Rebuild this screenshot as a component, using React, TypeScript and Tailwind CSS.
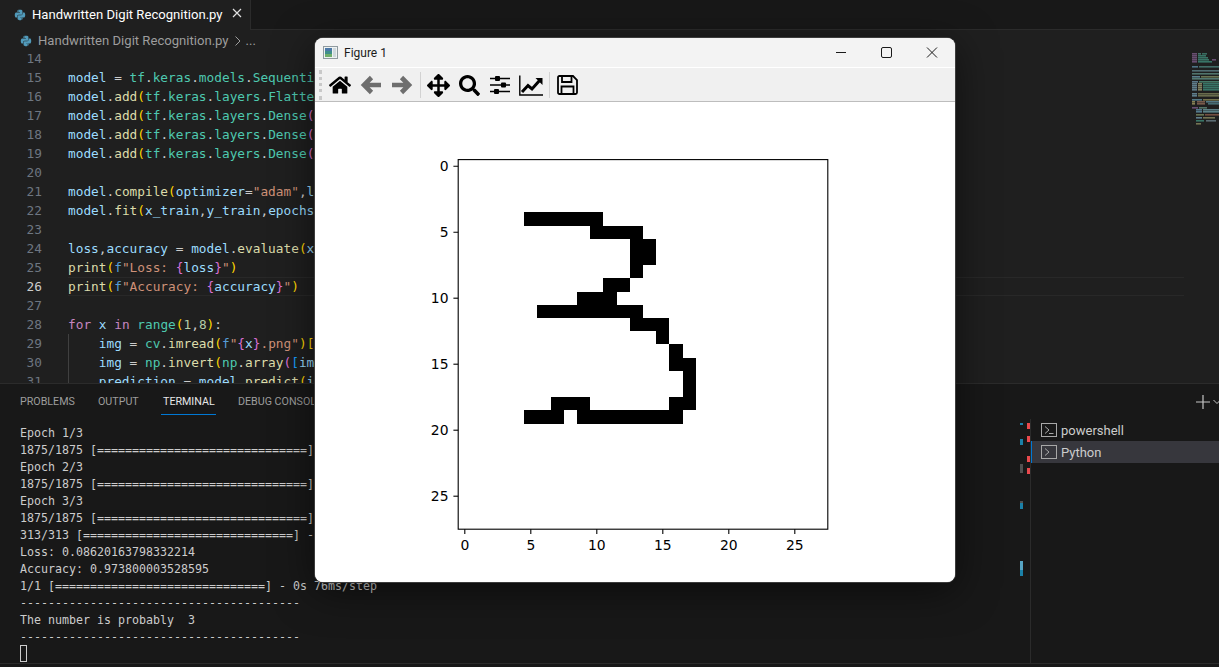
import { FaPython, FaHome, FaArrowsAlt, FaSearch } from 'react-icons/fa';

const ui = "font-['Roboto',sans-serif]";
const mono = "font-['DejaVu_Sans_Mono',monospace]";

const V = 'text-[#9cdcfe]';
const T = 'text-[#4ec9b0]';
const F = 'text-[#dcdcaa]';
const P = 'text-[#ffd700]';
const M = 'text-[#da70d6]';
const S = 'text-[#ce9178]';
const K = 'text-[#569cd6]';
const C = 'text-[#c586c0]';
const N = 'text-[#b5cea8]';
const W = 'text-[#cccccc]';
const L = 'text-[#179fff]';

type Tok = [string, string];

const addLine = (layer: string): Tok[] => [
  ['model', V], ['.', W], ['add', F], ['(', P], ['tf', T], ['.', W], ['keras', T], ['.', W], ['layers', T], ['.', W], [layer, T], ['(', M],
];

const code: Tok[][] = [
  [],
  [['model', V], [' = ', W], ['tf', T], ['.', W], ['keras', T], ['.', W], ['models', T], ['.', W], ['Sequential', T]],
  addLine('Flatten'),
  addLine('Dense'),
  addLine('Dense'),
  addLine('Dense'),
  [],
  [['model', V], ['.', W], ['compile', F], ['(', P], ['optimizer', V], ['=', W], ['"adam"', S], [',', W], ['loss', V]],
  [['model', V], ['.', W], ['fit', F], ['(', P], ['x_train', V], [',', W], ['y_train', V], [',', W], ['epochs', V]],
  [],
  [['loss', V], [',', W], ['accuracy', V], [' = ', W], ['model', V], ['.', W], ['evaluate', F], ['(', P], ['x_test', V]],
  [['print', F], ['(', P], ['f', K], ['"Loss: ', S], ['{', M], ['loss', V], ['}', M], ['"', S], [')', P]],
  [['print', F], ['(', P], ['f', K], ['"Accuracy: ', S], ['{', M], ['accuracy', V], ['}', M], ['"', S], [')', P]],
  [],
  [['for', C], [' ', W], ['x', V], [' ', W], ['in', C], [' ', W], ['range', T], ['(', P], ['1', N], [',', W], ['8', N], [')', P], [':', W]],
  [['    ', W], ['img', V], [' = ', W], ['cv', T], ['.', W], ['imread', F], ['(', P], ['f', K], ['"', S], ['{', M], ['x', V], ['}', M], ['.png"', S], [')', P], ['[', P]],
  [['    ', W], ['img', V], [' = ', W], ['np', T], ['.', W], ['invert', F], ['(', P], ['np', T], ['.', W], ['array', F], ['(', M], ['[', L], ['img', V]],
  [['    ', W], ['prediction', V], [' = ', W], ['model', V], ['.', W], ['predict', F], ['(', P], ['img', V]],
];

const bar = '='.repeat(30);
const dashes = '-'.repeat(40);
const terminal = [
  'Epoch 1/3',
  `1875/1875 [${bar}]`,
  'Epoch 2/3',
  `1875/1875 [${bar}]`,
  'Epoch 3/3',
  `1875/1875 [${bar}]`,
  `313/313 [${bar}] -`,
  'Loss: 0.08620163798332214',
  'Accuracy: 0.973800003528595',
  `1/1 [${bar}] - 0s 76ms/step`,
  dashes,
  'The number is probably  3',
  dashes,
];

// [row, first column, last column]
const digit = [
  [4, 5, 10], [5, 10, 13], [6, 13, 14], [7, 13, 14], [8, 13, 13], [9, 11, 12], [10, 9, 11],
  [11, 6, 13], [12, 13, 15], [13, 15, 15], [14, 16, 16], [15, 16, 17], [16, 17, 17], [17, 17, 17],
  [18, 7, 9], [18, 16, 17], [19, 5, 7], [19, 9, 16],
];

const ticks = [0, 5, 10, 15, 20, 25];
const cell = 13.2;
const axL = 143.2;
const axT = 57.6;

const Plot = () => (
  <svg width="640" height="480" viewBox="0 0 640 480" className="block">
    {digit.map(([r, a, b]) => (
      <rect key={`${r}-${a}`} x={axL + a * cell} y={axT + r * cell} width={(b - a + 1) * cell} height={cell} fill="#000" shapeRendering="crispEdges" />
    ))}
    <rect x={axL} y={axT} width="369.6" height="369.6" fill="none" stroke="#000" strokeWidth="1.1" />
    {ticks.map((t) => {
      const x = axL + (t + 0.5) * cell;
      const y = axT + (t + 0.5) * cell;
      return (
        <g key={t} fontFamily="DejaVu Sans, sans-serif" fontSize="13.9" fill="#000">
          <line x1={x} x2={x} y1="427.2" y2="432" stroke="#000" strokeWidth="1.1" />
          <text x={x} y="448" textAnchor="middle">{t}</text>
          <line x1="138.4" x2={axL} y1={y} y2={y} stroke="#000" strokeWidth="1.1" />
          <text x="133.5" y={y + 5} textAnchor="end">{t}</text>
        </g>
      );
    })}
  </svg>
);

const Arrow = ({ flip }: { flip?: boolean }) => (
  <svg width="22" height="20" viewBox="0 0 22 20" fill="none" stroke="#6e6e6e" strokeWidth="4.6" className={flip ? '-scale-x-100' : ''}>
    <path d="M11.5 2.5L4 10L11.5 17.5M4 10H21" />
  </svg>
);

const Sliders = () => (
  <svg width="22" height="20" viewBox="0 0 22 20" fill="none" stroke="#000" strokeWidth="1.6">
    <path d="M1 3.5H21M1 10H21M1 16.5H21" />
    <rect x="6" y="1" width="5" height="5" fill="#000" stroke="none" rx="1" />
    <rect x="12" y="7.5" width="5" height="5" fill="#000" stroke="none" rx="1" />
    <rect x="5" y="14" width="5" height="5" fill="#000" stroke="none" rx="1" />
  </svg>
);

const ChartIcon = () => (
  <svg width="24" height="21" viewBox="0 0 24 21" fill="none" stroke="#000">
    <path d="M0.8 0.5V20H24" strokeWidth="1.4" />
    <path d="M3 17L9 10.5L13 14L21 5" strokeWidth="3" />
    <path d="M16.5 3H23.5V10Z" fill="#000" stroke="none" />
  </svg>
);

const SaveIcon = () => (
  <svg width="21" height="20" viewBox="0 0 21 20" fill="none" stroke="#000" strokeWidth="1.8">
    <path d="M2.5 1H16L20 5V17.5Q20 19 18.5 19H2.5Q1 19 1 17.5V2.5Q1 1 2.5 1Z" />
    <path d="M5 1V7H14.5V1" />
    <path d="M4.5 19V11.5H16.5V19" />
  </svg>
);

const Tool = ({ children }: { children: React.ReactNode }) => (
  <div className="w-[31px] h-full flex items-center justify-center shrink-0">{children}</div>
);

const Sep = () => (
  <div className="w-[5px] h-full flex items-center justify-center shrink-0">
    <div className="w-px h-[26px] bg-[#d2d2d2]" />
  </div>
);

const FigureWindow = () => (
  <div className="absolute left-[315px] top-[38px] w-[640px] h-[544px] rounded-lg overflow-hidden bg-white flex flex-col ring-1 ring-[#3c3c3c] shadow-[0_8px_40px_rgba(0,0,0,0.55)]">
    <div className="h-[30px] shrink-0 bg-[#f3f3f3] border-b border-white flex items-center pl-2 relative">
      <svg width="15" height="13" viewBox="0 0 15 13" className="shrink-0">
        <rect x="0.5" y="0.5" width="14" height="12" fill="#eef2f2" stroke="#8f9a9f" />
        <rect x="2" y="2" width="7" height="9" fill="#3f8f8a" />
        <rect x="2" y="2" width="7" height="3" fill="#4d79a8" />
        <rect x="2" y="8" width="7" height="3" fill="#6fae6a" />
        <rect x="10" y="2" width="3" height="9" fill="#cfd8dc" />
      </svg>
      <span className={`${ui} ml-[6px] text-[12px] text-[#1b1b1b]`}>Figure 1</span>
      <svg width="110" height="12" viewBox="0 0 110 12" className="absolute left-[520px] top-[9px]" fill="none" stroke="#1a1a1a">
        <path d="M1 5.5H11" />
        <rect x="46.5" y="0.5" width="10" height="10" rx="1.5" />
        <path d="M92 0.5L102 10.5M102 0.5L92 10.5" />
      </svg>
    </div>
    <div className="h-[34px] shrink-0 bg-[#f0f0f0] border-b border-[#bdbdbd] flex items-center pl-[9.5px] pt-[1px]">
      <Tool><FaHome className="w-[22px] h-[22px] text-black" /></Tool>
      <Tool><Arrow /></Tool>
      <Tool><Arrow flip /></Tool>
      <Sep />
      <Tool><FaArrowsAlt className="w-[23px] h-[23px] text-black" /></Tool>
      <Tool><FaSearch className="w-[21px] h-[21px] text-black" /></Tool>
      <Tool><Sliders /></Tool>
      <Tool><ChartIcon /></Tool>
      <Sep />
      <Tool><SaveIcon /></Tool>
    </div>
    <div className="flex-1 bg-white">
      <Plot />
    </div>
    <div className="absolute left-[4px] top-[32px] h-[30px] border-l-[3px] border-dotted border-[#c8c8c8]" />
  </div>
);

// minimap rows: y, then runs of [x, width, colour]
const minimap: [number, [number, number, string][]][] = [
  [53, [[1192, 5, '#7c5a86'], [1198, 3, '#4d8a7c'], [1202, 5, '#3f7f70']]],
  [55, [[1192, 5, '#7c5a86'], [1198, 8, '#3f8a78']]],
  [57, [[1192, 5, '#7c5a86'], [1198, 10, '#3f8a78']]],
  [59, [[1192, 5, '#7c5a86'], [1198, 11, '#3f8a78'], [1212, 4, '#7c5a86']]],
  [61, [[1192, 5, '#7c5a86'], [1198, 14, '#3f8a78']]],
  [66, [[1192, 6, '#5a8aa0'], [1199, 20, '#4a7f78']]],
  [70, [[1192, 27, '#5d7f86']]],
  [73, [[1192, 27, '#5d8a80']]],
  [76, [[1192, 8, '#6a98a8'], [1201, 18, '#7a8a60']]],
  [78, [[1192, 27, '#5f8f85']]],
  [81, [[1192, 6, '#6a8fa5'], [1199, 20, '#4f8f78']]],
  [83, [[1192, 5, '#7096a8'], [1198, 4, '#9a9a70'], [1203, 16, '#3f8a78']]],
  [85, [[1192, 5, '#7096a8'], [1198, 4, '#9a9a70'], [1203, 16, '#3f8a78']]],
  [87, [[1192, 5, '#7096a8'], [1198, 4, '#9a9a70'], [1203, 16, '#3f8a78']]],
  [89, [[1192, 5, '#7096a8'], [1198, 4, '#9a9a70'], [1203, 16, '#3f8a78']]],
  [93, [[1192, 5, '#6f96a8'], [1198, 21, '#7a7f58']]],
  [95, [[1192, 5, '#6f96a8'], [1198, 21, '#7a7f58']]],
  [99, [[1192, 10, '#5f8f9f'], [1203, 16, '#8a8a58']]],
  [101, [[1192, 3, '#a09a60'], [1197, 8, '#8f6a58'], [1206, 13, '#5f8f9f']]],
  [103, [[1192, 3, '#a09a60'], [1197, 8, '#8f6a58'], [1208, 11, '#4f7f88']]],
  [107, [[1192, 6, '#7c5a86'], [1199, 8, '#5f8a78']]],
  [109, [[1196, 6, '#5f90a8'], [1203, 16, '#6a98a0']]],
  [111, [[1196, 6, '#5f90a8'], [1203, 16, '#6a98a0']]],
  [114, [[1196, 8, '#7a8a60'], [1205, 14, '#8a5a48']]],
  [117, [[1196, 6, '#6f96a8'], [1203, 12, '#8a8a60']]],
  [120, [[1196, 8, '#3f8a78'], [1206, 10, '#6a7f88']]],
  [123, [[1196, 5, '#8a8a60']]],
];

const Minimap = () => (
  <svg width="27" height="75" viewBox="1192 52 27 75" className="absolute left-[1192px] top-0">
    {minimap.map(([y, runs]) =>
      runs.map(([x, w, color]) => <rect key={`${y}-${x}`} x={x} y={y} width={w} height="1.6" fill={color} opacity="0.8" />),
    )}
  </svg>
);

// overview ruler next to the terminal: x, y, height, colour
const marks: [number, number, number, string][] = [
  [1020, 423, 2, '#1b81a8'],
  [1027, 423, 6, '#e9494d'],
  [1027, 436, 6, '#e9494d'],
  [1020, 439, 6, '#1b81a8'],
  [1027, 456, 6, '#e9494d'],
  [1020, 464, 9, '#505050'],
  [1027, 468, 6, '#e9494d'],
  [1020, 501, 2, '#505050'],
  [1020, 503, 6, '#1b81a8'],
  [1020, 561, 9, '#57a5c4'],
  [1020, 570, 6, '#1b81a8'],
];

const TermIcon = ({ prompt }: { prompt?: boolean }) => (
  <svg width="16" height="14" viewBox="0 0 16 14" fill="none" stroke="#a8a8a8" className="shrink-0">
    <rect x="0.5" y="0.5" width="15" height="13" />
    <path d="M4 3.5L8 7L4 10.5" />
    {prompt && <path d="M8 10.5H12.5" />}
  </svg>
);

const PanelTab = ({ label, active, width }: { label: string; active?: boolean; width: string }) => (
  <span className={`${width} relative text-[10.7px] ${active ? 'text-[#e7e7e7]' : 'text-[#9d9d9d]'}`}>
    {label}
    {active && <span className="absolute left-[-2px] top-[20px] w-[55px] h-px bg-[#0078d4]" />}
  </span>
);

const App = () => {
  return (
    <div className="relative w-[1219px] h-[667px] overflow-hidden bg-[#181818] flex flex-col">
      <div className="h-[30px] shrink-0 bg-[#181818] flex border-b border-[#2b2b2b]">
        <div className={`${ui} w-[251px] h-[30px] bg-[#1f1f1f] border-r border-[#2b2b2b] flex items-center pl-[14px] text-[13.1px] text-white`}>
          <FaPython className="w-[12px] h-[12px] text-[#519aba] shrink-0" />
          <span className="ml-[6px] whitespace-nowrap">Handwritten Digit Recognition.py</span>
          <svg width="10" height="10" viewBox="0 0 10 10" className="absolute left-[232px] top-[8px]" stroke="#e0e0e0" strokeWidth="1.2">
            <path d="M1 1L9 9M9 1L1 9" />
          </svg>
        </div>
      </div>
      <div className={`${ui} h-[22px] shrink-0 bg-[#1f1f1f] flex items-center pl-[20px] text-[13.1px] text-[#9d9d9d]`}>
        <FaPython className="w-[12px] h-[12px] text-[#519aba] shrink-0" />
        <span className="ml-[6px] whitespace-nowrap">Handwritten Digit Recognition.py</span>
        <svg width="6" height="10" viewBox="0 0 6 10" fill="none" stroke="#9d9d9d" className="ml-[6px] shrink-0">
          <path d="M0.5 0.5L5 5L0.5 9.5" />
        </svg>
        <span className="ml-[5px]">...</span>
      </div>
      <div className={`${mono} relative flex-1 bg-[#1f1f1f] overflow-hidden text-[12.79px]`}>
        <div className="-mt-[3px]">
          {code.map((tokens, i) => (
            <div key={i} className="flex h-[19px] leading-[19px] whitespace-pre">
              <span className={`w-[42px] text-right shrink-0 ${i === 12 ? 'text-[#cccccc]' : 'text-[#6e7681]'}`}>{i + 14}</span>
              <div className={`ml-[26px] w-[1116px] relative ${i === 12 ? 'border-y border-[#282828] leading-[17px]' : ''}`}>
                {(i === 15 || i === 16 || i === 17) && <span className="absolute left-0 top-0 h-full w-px bg-[#404040]" />}
                {tokens.map(([text, color], j) => (
                  <span key={j} className={color}>{text}</span>
                ))}
              </div>
            </div>
          ))}
        </div>
        <Minimap />
      </div>
      <div className="h-[280px] shrink-0 bg-[#181818] border-t border-[#2b2b2b] flex flex-col">
        <div className={`${ui} h-[36px] shrink-0 flex items-center pl-[20px] relative`}>
          <PanelTab label="PROBLEMS" width="w-[78px]" />
          <PanelTab label="OUTPUT" width="w-[65px]" />
          <PanelTab label="TERMINAL" active width="w-[75px]" />
          <PanelTab label="DEBUG CONSOLE" width="w-[100px]" />
          <svg width="14" height="14" viewBox="0 0 14 14" className="absolute left-[1196px] top-[11px]" stroke="#c5c5c5" strokeWidth="1.2">
            <path d="M7 0V14M0 7H14" />
          </svg>
          <svg width="8" height="6" viewBox="0 0 8 6" fill="none" className="absolute left-[1213px] top-[15px]" stroke="#c5c5c5">
            <path d="M0.5 1L4 4.5L7.5 1" />
          </svg>
        </div>
        <div className="flex-1 flex min-h-0 relative">
          <div className={`${mono} w-[1030px] shrink-0 pl-[20px] pt-[5px] text-[11.63px] leading-[17px] text-[#cccccc] whitespace-pre`}>
            {terminal.map((line, i) => (
              <div key={i} className="h-[17px]">{line}</div>
            ))}
            <div className="h-[17px] -mt-[1px] flex items-center">
              <span className="block w-[7px] h-[17px] border border-[#cccccc]" />
            </div>
          </div>
          <div className={`${ui} flex-1 -mt-[1px] border-l border-[#2b2b2b] text-[13px] text-[#cccccc]`}>
            <div className="h-[22px] flex items-center pl-[10px] gap-[4px]">
              <TermIcon prompt />
              <span className="pt-[1px]">powershell</span>
            </div>
            <div className="h-[22px] flex items-center pl-[9px] gap-[4px] bg-[#37373d] border-l border-[#0078d4]">
              <TermIcon />
              <span className="pt-[1px]">Python</span>
            </div>
          </div>
        </div>
      </div>
      <div className="h-[4px] shrink-0 bg-[#181818] border-t border-[#2b2b2b]" />
      {marks.map(([x, y, h, color]) => (
        <div
          key={`${x}-${y}`}
          className="absolute w-[3px]"
          style={{ left: x, top: y, height: h, backgroundColor: color }}
        />
      ))}
      <FigureWindow />
    </div>
  );
};

export default App;
